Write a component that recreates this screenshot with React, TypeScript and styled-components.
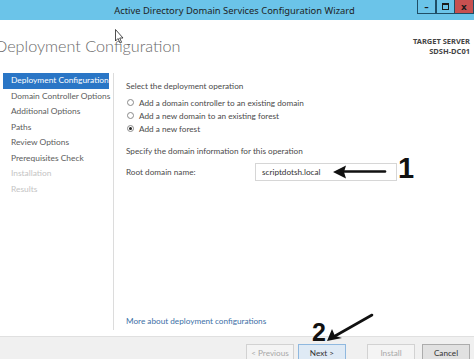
import React from 'react';
import styled, { createGlobalStyle } from 'styled-components';

const GlobalStyle = createGlobalStyle`
  html, body {
    margin: 0;
    padding: 0;
    background: #ffffff;
  }
  body {
    font-family: Lato, 'Noto Sans', sans-serif;
    color: #444444;
  }
`;

const Window = styled.div`
  position: relative;
  width: 474px;
  height: 359px;
  overflow: hidden;
  display: flex;
  flex-direction: column;
  background: #ffffff;
`;

const TitleBar = styled.div`
  height: 20px;
  flex-shrink: 0;
  background: #6bc4e9;
  display: flex;
  align-items: center;
`;

const TitleText = styled.div`
  flex: 1;
  text-align: center;
  font-family: 'Noto Sans', sans-serif;
  font-size: 9.4px;
  color: #1e1e1e;
  padding-left: 52px;
  white-space: nowrap;
`;

const WinButtons = styled.div`
  display: flex;
  align-self: flex-start;
  height: 14px;
`;

const WinButton = styled.div<{ close?: boolean }>`
  width: 19px;
  height: 14px;
  box-sizing: border-box;
  border: 1px solid #1f4e66;
  border-top: none;
  border-left: ${(p) => (p.close ? 'none' : '1px solid #1f4e66')};
  background: ${(p) => (p.close ? '#c75050' : 'transparent')};
  display: flex;
  align-items: center;
  justify-content: center;
  font-family: 'DejaVu Sans', sans-serif;
  font-size: 9px;
  font-weight: 700;
  color: #1b1b1b;
`;

const MaxGlyph = styled.span`
  width: 5px;
  height: 4px;
  border: 1px solid #1b1b1b;
  border-top-width: 2px;
`;

const Header = styled.div`
  height: 50px;
  flex-shrink: 0;
  display: flex;
  justify-content: space-between;
  align-items: flex-start;
`;

const PageTitle = styled.h1`
  margin: 16px 0 0 -5px;
  font-size: 16.2px;
  font-weight: 300;
  color: #6a6a6a;
`;

const Server = styled.div`
  margin: 16px 4px 0 0;
  text-align: right;
  font-family: 'Noto Sans', sans-serif;
  font-size: 7.5px;
  font-weight: 700;
  line-height: 10px;
  color: #444444;
`;

const Body = styled.div`
  flex: 1;
  display: flex;
  min-height: 0;
`;

const Sidebar = styled.nav`
  width: 113px;
  flex-shrink: 0;
  padding: 3px 0 0 3px;
  box-sizing: border-box;
  display: flex;
  flex-direction: column;
`;

const NavItem = styled.div<{ active?: boolean; disabled?: boolean }>`
  height: 15.5px;
  line-height: 15.5px;
  padding-left: 8px;
  margin-right: 4px;
  font-size: 8.4px;
  white-space: nowrap;
  background: ${(p) => (p.active ? '#2a76c6' : 'transparent')};
  color: ${(p) => (p.active ? '#ffffff' : p.disabled ? '#c4c4c4' : '#5c5c5c')};
`;

const Content = styled.div`
  flex: 1;
  border-left: 1px solid #dcdcdc;
  margin: 3px 0 6px;
  padding: 8px 0 0 12px;
  display: flex;
  flex-direction: column;
  font-size: 8.2px;
  color: #4a4a4a;
`;

const SectionLabel = styled.div<{ top?: number }>`
  margin-top: ${(p) => p.top ?? 0}px;
  margin-bottom: 5px;
`;

const RadioList = styled.div`
  display: flex;
  flex-direction: column;
  gap: 2px;
  margin-top: 1px;
`;

const RadioRow = styled.label`
  display: flex;
  align-items: center;
  height: 11px;
  gap: 5px;
`;

const RadioDot = styled.span<{ checked?: boolean }>`
  width: 7px;
  height: 7px;
  border-radius: 50%;
  border: 1px solid #8a8a8a;
  box-sizing: border-box;
  margin-left: 1px;
  display: flex;
  align-items: center;
  justify-content: center;
  &::after {
    content: '';
    width: 3px;
    height: 3px;
    border-radius: 50%;
    background: ${(p) => (p.checked ? '#222222' : 'transparent')};
  }
`;

const Spacer = styled.div`
  flex: 1;
`;

const FieldRow = styled.div`
  display: flex;
  align-items: center;
  margin-top: 2px;
`;

const FieldLabel = styled.div`
  width: 129px;
`;

const TextBox = styled.div`
  width: 142px;
  height: 18px;
  box-sizing: border-box;
  border: 1px solid #d6d6d6;
  padding-left: 6px;
  display: flex;
  align-items: center;
  color: #333333;
`;

const MoreLink = styled.a`
  color: #3c6fa6;
  text-decoration: none;
  margin-bottom: 4px;
`;

const Footer = styled.div`
  height: 23px;
  flex-shrink: 0;
  background: #f0f0f0;
  border-top: 1px solid #e0e0e0;
  display: flex;
  align-items: flex-start;
  padding: 7px 4px 0 0;
  box-sizing: border-box;
`;

const Button = styled.div<{ kind?: 'primary' | 'disabled' | 'normal'; gap?: number }>`
  width: 48px;
  height: 18px;
  box-sizing: border-box;
  margin-left: ${(p) => p.gap ?? 0}px;
  display: flex;
  align-items: center;
  justify-content: center;
  font-size: 8.2px;
  border: 1px solid
    ${(p) =>
      p.kind === 'primary' ? '#8fb8df' : p.kind === 'disabled' ? '#d2d2d2' : '#acacac'};
  background: ${(p) =>
    p.kind === 'primary' ? '#dfeaf5' : p.kind === 'disabled' ? '#f4f4f4' : '#e1e1e1'};
  color: ${(p) => (p.kind === 'disabled' ? '#a8a8a8' : '#333333')};
`;

const Annotation = styled.div<{ size: number }>`
  position: absolute;
  font-family: 'Liberation Sans', Arial, sans-serif;
  font-weight: 700;
  font-size: ${(p) => p.size}px;
  line-height: 1;
  color: #111111;
`;

const Overlay = styled.svg`
  position: absolute;
  left: 0;
  top: 0;
  pointer-events: none;
`;

const steps = [
  { label: 'Deployment Configuration', active: true },
  { label: 'Domain Controller Options' },
  { label: 'Additional Options' },
  { label: 'Paths' },
  { label: 'Review Options' },
  { label: 'Prerequisites Check' },
  { label: 'Installation', disabled: true },
  { label: 'Results', disabled: true },
];

const operations = [
  { label: 'Add a domain controller to an existing domain' },
  { label: 'Add a new domain to an existing forest' },
  { label: 'Add a new forest', checked: true },
];

const App = () => {
  return (
    <Window>
      <GlobalStyle />
      <TitleBar>
        <TitleText>Active Directory Domain Services Configuration Wizard</TitleText>
        <WinButtons>
          <WinButton>–</WinButton>
          <WinButton>
            <MaxGlyph />
          </WinButton>
          <WinButton close>x</WinButton>
        </WinButtons>
      </TitleBar>
      <Header>
        <PageTitle>Deployment Configuration</PageTitle>
        <Server>
          TARGET SERVER
          <br />
          SDSH-DC01
        </Server>
      </Header>
      <Body>
        <Sidebar>
          {steps.map((s) => (
            <NavItem key={s.label} active={s.active} disabled={s.disabled}>
              {s.label}
            </NavItem>
          ))}
        </Sidebar>
        <Content>
          <SectionLabel>Select the deployment operation</SectionLabel>
          <RadioList>
            {operations.map((o) => (
              <RadioRow key={o.label}>
                <RadioDot checked={o.checked} />
                {o.label}
              </RadioRow>
            ))}
          </RadioList>
          <SectionLabel top={12}>
            Specify the domain information for this operation
          </SectionLabel>
          <FieldRow>
            <FieldLabel>Root domain name:</FieldLabel>
            <TextBox>scriptdotsh.local</TextBox>
          </FieldRow>
          <Spacer />
          <MoreLink href="#">More about deployment configurations</MoreLink>
        </Content>
      </Body>
      <Footer>
        <Spacer />
        <Button kind="disabled">&lt; Previous</Button>
        <Button kind="primary" gap={4}>
          Next &gt;
        </Button>
        <Button kind="disabled" gap={21}>
          Install
        </Button>
        <Button kind="normal" gap={7}>
          Cancel
        </Button>
      </Footer>

      <Annotation size={29} style={{ left: 398, top: 154 }}>
        1
      </Annotation>
      <Annotation size={25} style={{ left: 312, top: 320 }}>
        2
      </Annotation>
      <Overlay width={474} height={359} viewBox="0 0 474 359">
        {/* arrow 1 */}
        <path d="M385 171.5 L344 171.5" stroke="#111" strokeWidth={2.6} strokeLinecap="round" />
        <path d="M333 172 L346 165.5 L344 172 L346 178.5 Z" fill="#111" />
        {/* arrow 2 */}
        <path d="M372 315 L335 336" stroke="#111" strokeWidth={2.6} strokeLinecap="round" />
        <path d="M327 341 L332 329 L335 336 L342 338 Z" fill="#111" />
        {/* mouse cursor */}
        <path
          d="M115.5 29.5 L115.5 41 L118 38.5 L120 43 L121.6 42.3 L119.7 38 L123 38 Z"
          fill="#ffffff"
          stroke="#222"
          strokeWidth={0.8}
          strokeLinejoin="round"
        />
      </Overlay>
    </Window>
  );
};

export default App;
